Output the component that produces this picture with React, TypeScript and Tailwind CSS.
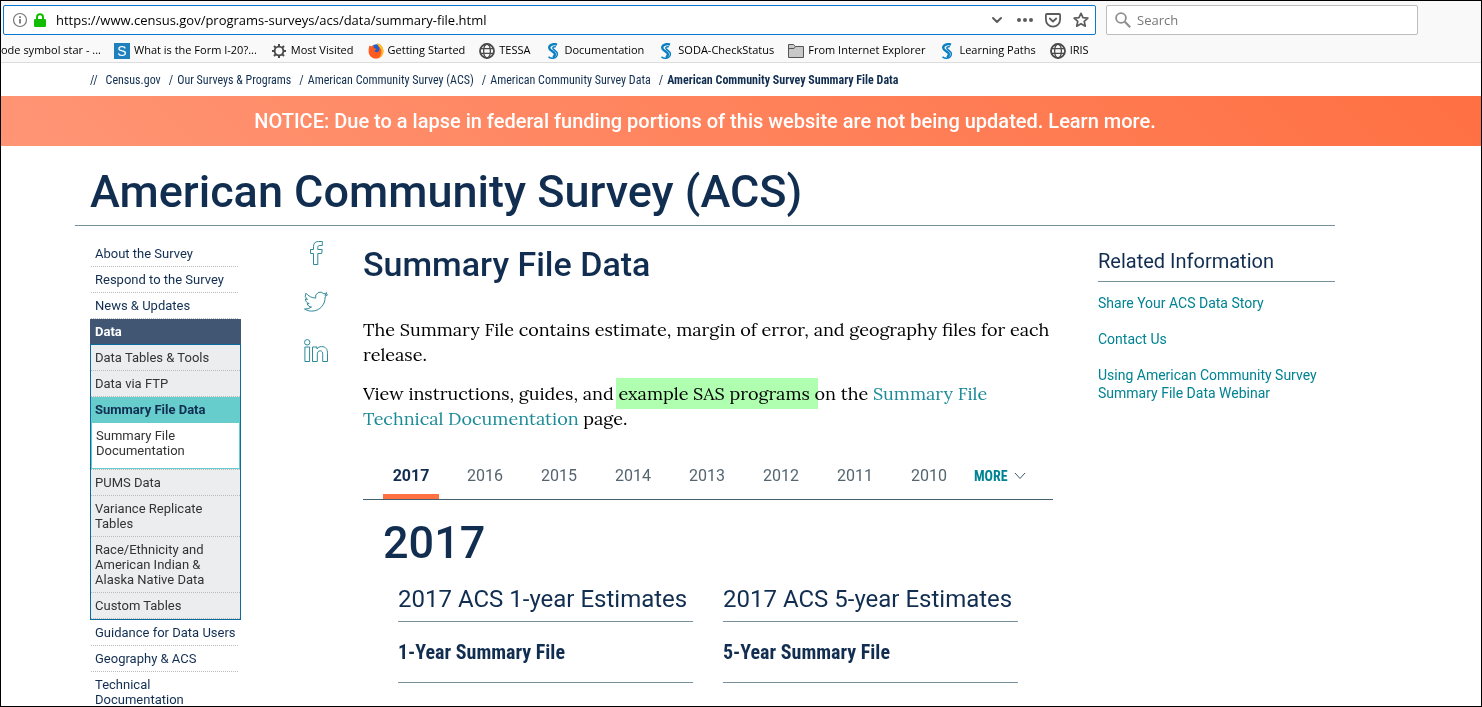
import type { ReactNode } from 'react'
import { ChevronDown } from 'lucide-react'

type Bookmark = { label: string; icon: ReactNode }
type SideItem = { label: string; active?: boolean; children?: string[] }

// ── Icons ────────────────────────────────────────────────────────
const GlobeIcon = () => (
  <svg viewBox="0 0 16 16" className="size-4 shrink-0" fill="none" stroke="#4a4a4a" strokeWidth="1.3">
    <circle cx="8" cy="8" r="7" strokeWidth="1.8" />
    <ellipse cx="8" cy="8" rx="3.4" ry="7" />
    <path d="M1.6 5.6h12.8M1.6 10.4h12.8" />
  </svg>
)

const SocrataIcon = () => (
  <svg viewBox="0 0 16 16" className="size-4 shrink-0" fill="none" stroke="#0a7fc2">
    <path d="M12 1.6C8.5.4 4.400 1.700 4.200 4.600c-.1 2.400 3 3.400 4.800 5 1.500 1.400 1 3.600-1 4.800" strokeWidth="2.4" />
    <path d="M10.800 3.800c-2.200-.5-3.600.6-2.700 1.900 1.200 1.500 4.300 2.500 4.300 5.300 0 2.700-2.600 4.200-5 4.200-1.600 0-2.800-.5-3.900-1.400" strokeWidth="1.5" />
  </svg>
)

const FormIcon = () => (
  <span className="flex size-4 shrink-0 items-center justify-center bg-[#2080bd] font-['Liberation_Sans',sans-serif] text-sm leading-4 text-white">S</span>
)

const GearIcon = () => (
  <svg viewBox="0 0 16 16" className="size-4 shrink-0" fill="none" stroke="#4a4a4a">
    <circle cx="8" cy="8" r="4.4" strokeWidth="1.9" />
    <path
      d="M8 1v2.600M8 12.400V15M1 8h2.600M12.400 8H15M3 3l1.900 1.900M11.100 11.100 13 13M13 3l-1.900 1.900M4.900 11.100 3 13"
      strokeWidth="2"
    />
  </svg>
)

const FirefoxIcon = () => (
  <svg viewBox="0 0 16 16" className="size-4 shrink-0">
    <circle cx="8.5" cy="7.5" r="6.3" fill="#1c5fd0" />
    <path
      d="M1.500 2.600C2.300 3 2.800 3.300 3.300 3.400 4.300 2.800 5.300 2.700 6.300 3 5.500 3.600 5.300 4.400 5.800 5c1 .7 2.300.3 2.600 1.100-.3.8-1.400 1-1.700 1.700.2 1.200 1.700 1.700 3 1.200 1.700-.8 2.200-3 1.300-4.500C10.500 3 9.200 1.800 9.300.4c2.600.4 5.500 3 6 6.500.6 4.800-2.700 8.700-7.300 8.700S.6 12.200.6 8c0-2.200.4-3.800.9-5.400z"
      fill="#ff5a1f"
    />
    <path d="M9.300.4c2.600.4 5.500 3 6 6.500.4 3.800-1.500 6.900-4.700 8.200 2.300-2.100 3.300-4.800 2.700-7.800C12.800 4.200 9.400 3 9.300.4z" fill="#ffc21a" />
  </svg>
)

const FolderIcon = () => (
  <svg viewBox="0 0 16 16" className="size-4 shrink-0" fill="#c8c8c8" stroke="#555" strokeWidth="1">
    <path d="M.5 14.500v-13h5l2 2h8v11z" />
    <path d="M.5 5.500H6l1.500-2" fill="none" />
  </svg>
)

const InfoIcon = () => (
  <svg viewBox="0 0 16 16" className="size-4 shrink-0" fill="none" stroke="#777" strokeWidth="1.2">
    <circle cx="8" cy="8" r="6.5" />
    <path d="M8 7v4.500M8 4.200v1.700" strokeWidth="1.8" />
  </svg>
)

const LockIcon = () => (
  <svg viewBox="0 0 12 14" className="h-3.5 w-3 shrink-0" fill="#12bc00">
    <rect x="0" y="6" width="12" height="8" rx="1.2" />
    <path d="M3 7V4.200a3 3 0 0 1 6 0V7" fill="none" stroke="#12bc00" strokeWidth="2" />
  </svg>
)

const PocketIcon = () => (
  <svg viewBox="0 0 16 16" className="size-4" fill="none" stroke="#5c5c5c" strokeWidth="1.8" strokeLinecap="round" strokeLinejoin="round">
    <path d="M1.900 2h12.200c.6 0 1 .4 1 1v4.500a7.100 7.100 0 0 1-14.200 0V3c0-.6.4-1 1-1z" />
    <path d="M4.800 6.500 8 9.500l3.200-3" />
  </svg>
)

const StarIcon = () => (
  <svg viewBox="0 0 16 16" className="size-4" fill="none" stroke="#5c5c5c" strokeWidth="1.7" strokeLinejoin="round">
    <path d="m8 1.300 2 4.400 4.900.5-3.700 3.200 1.100 4.800L8 11.700l-4.300 2.500 1.100-4.800L1.100 6.200 6 5.700z" />
  </svg>
)

const SearchIcon = () => (
  <svg viewBox="0 0 16 16" className="size-4 shrink-0" fill="none" stroke="#8f8f8f">
    <circle cx="6" cy="6" r="4.9" strokeWidth="1.8" />
    <path d="m9.800 9.800 5.400 5.400" strokeWidth="2.2" />
  </svg>
)

const FacebookOutline = () => (
  <svg viewBox="0 0 24 24" className="size-6" fill="none" stroke="#2d8b98" strokeWidth="1">
    <path d="M9.500 23.500V12.500h-3v-4h3V5.500c0-3.400 1.800-5 5-5h3.800v4h-2.600c-1.500 0-1.900.6-1.900 1.900v2.100h4.400l-.5 4h-3.900v11z" />
  </svg>
)

const TwitterOutline = () => (
  <svg viewBox="0 0 24 24" className="size-6" fill="none" stroke="#2d8b98" strokeWidth="1" strokeLinejoin="round">
    <path d="M23.500 4.600c-.8.400-1.700.6-2.700.7 1-.6 1.700-1.500 2-2.600-.9.500-1.900.9-3 1.100a4.700 4.700 0 0 0-8.100 4.300C7.800 8 4.400 6.100 2 3.200a4.700 4.700 0 0 0 1.500 6.300c-.8 0-1.500-.2-2.100-.6 0 2.300 1.600 4.200 3.800 4.700-.7.200-1.400.2-2.100.1.600 1.900 2.300 3.200 4.400 3.300A9.500 9.500 0 0 1 .5 19c2.100 1.300 4.600 2.100 7.200 2.100 8.800 0 13.700-7.400 13.400-14.100.9-.6 1.700-1.500 2.400-2.400z" />
  </svg>
)

const LinkedinOutline = () => (
  <svg viewBox="0 0 24 24" className="size-6" fill="none" stroke="#2d8b98" strokeWidth="1">
    <circle cx="3.2" cy="3.3" r="2.7" />
    <path d="M.9 8h4.700v14.500H.9zM8.500 8H13v2c.8-1.500 2.400-2.400 4.500-2.400 4.500 0 6 2.700 6 7v7.900h-4.800v-7.200c0-1.900-.4-3.500-2.500-3.500s-2.900 1.500-2.900 3.400v7.300H8.500z" />
  </svg>
)

// ── Data ─────────────────────────────────────────────────────────
const bookmarks: Bookmark[] = [
  { label: 'What is the Form I-20?...', icon: <FormIcon /> },
  { label: 'Most Visited', icon: <GearIcon /> },
  { label: 'Getting Started', icon: <FirefoxIcon /> },
  { label: 'TESSA', icon: <GlobeIcon /> },
  { label: 'Documentation', icon: <SocrataIcon /> },
  { label: 'SODA-CheckStatus', icon: <SocrataIcon /> },
  { label: 'From Internet Explorer', icon: <FolderIcon /> },
  { label: 'Learning Paths', icon: <SocrataIcon /> },
  { label: 'IRIS', icon: <GlobeIcon /> },
]

const crumbs = ['Census.gov', 'Our Surveys & Programs', 'American Community Survey (ACS)', 'American Community Survey Data']

const dataMenu: SideItem[] = [
  { label: 'Data Tables & Tools' },
  { label: 'Data via FTP' },
  { label: 'Summary File Data', active: true, children: ['Summary File Documentation'] },
  { label: 'PUMS Data' },
  { label: 'Variance Replicate Tables' },
  { label: 'Race/Ethnicity and American Indian & Alaska Native Data' },
  { label: 'Custom Tables' },
]

const years = ['2017', '2016', '2015', '2014', '2013', '2012', '2011', '2010']

const estimates = [
  { title: '2017 ACS 1-year Estimates', file: '1-Year Summary File' },
  { title: '2017 ACS 5-year Estimates', file: '5-Year Summary File' },
]

const related = ['Share Your ACS Data Story', 'Contact Us', 'Using American Community Survey Summary File Data Webinar']

// ── Browser toolbar ──────────────────────────────────────────────
function BrowserBar() {
  return (
    <header className="border-b border-[#dcdcdc] bg-[#f9f9fa] font-['Open_Sans','Noto_Sans',sans-serif] text-[11px] text-black">
      <div className="flex gap-2.5 pt-1 pr-[63px] pl-0.5">
        <div className="flex h-[30px] min-w-0 flex-1 items-center gap-1.5 rounded-xs border border-[#0a78d0] bg-white pr-1.5 pl-2">
          <InfoIcon />
          <LockIcon />
          <input
            aria-label="Address"
            defaultValue="https://www.census.gov/programs-surveys/acs/data/summary-file.html"
            className="min-w-0 flex-1 pt-0.5 pl-1 text-[13px] outline-none"
          />
          <div className="flex items-center gap-3">
            <button aria-label="Show history"><ChevronDown className="size-4" color="#5c5c5c" strokeWidth={3} /></button>
            <button aria-label="Page actions">
              <svg viewBox="0 0 16 16" className="size-4" fill="#5c5c5c">
                <circle cx="2" cy="8" r="2" /><circle cx="8" cy="8" r="2" /><circle cx="14" cy="8" r="2" />
              </svg>
            </button>
            <button aria-label="Save to Pocket"><PocketIcon /></button>
            <button aria-label="Bookmark this page"><StarIcon /></button>
          </div>
        </div>
        <label className="flex h-[30px] w-[312px] items-center gap-1.5 rounded-xs border border-[#bdbdbd] bg-white px-2">
          <SearchIcon />
          <input aria-label="Search" placeholder="Search" className="min-w-0 flex-1 pt-0.5 text-[13px] outline-none placeholder:text-[#777]" />
        </label>
      </div>
      <nav aria-label="Bookmarks" className="flex h-[27px] items-center gap-3.5 pt-1 whitespace-nowrap">
        <a href="#" className="-mr-px flex w-[100px] shrink-0 justify-end overflow-hidden">ode symbol star - ...</a>
        {bookmarks.map(({ label, icon }) => (
          <a key={label} href="#" className="flex items-center gap-1">{icon}{label}</a>
        ))}
      </nav>
    </header>
  )
}

// ── Left navigation ──────────────────────────────────────────────
function SideLink({ label }: { label: string }) {
  return (
    <li className="mr-[3px] ml-px border-b border-dotted border-[#bbb]">
      <a href="#" className="block py-[5px] pl-1">{label}</a>
    </li>
  )
}

function SideNav() {
  return (
    <nav aria-label="Section" className="w-[151px] shrink-0 text-[13px] leading-[15px] text-[#112e51]">
      <ul>
        <SideLink label="About the Survey" />
        <SideLink label="Respond to the Survey" />
        <SideLink label="News & Updates" />
        <li>
          <a href="#" className="block bg-[#415672] py-[5px] pl-[5px] font-bold text-white">Data</a>
          <ul className="border border-[#0a6b9c] bg-[#ebedef] text-[#333]">
            {dataMenu.map(item => (
              <li key={item.label} className="border-b border-dotted border-[#bbb]">
                <a
                  href="#"
                  className={item.active ? 'block bg-[#66cccc] pt-[5px] pb-1.5 pl-1 font-bold text-[#112e51]' : 'block py-[5px] pr-7 pl-1'}
                >
                  {item.label}
                </a>
                {item.children && (
                  <ul className="border border-t-0 border-[#66cccc] bg-white">
                    {item.children.map(c => (
                      <li key={c}><a href="#" className="block pt-[5px] pr-8 pb-2.5 pl-1">{c}</a></li>
                    ))}
                  </ul>
                )}
              </li>
            ))}
          </ul>
        </li>
        <SideLink label="Guidance for Data Users" />
        <SideLink label="Geography & ACS" />
        <SideLink label="Technical Documentation" />
      </ul>
    </nav>
  )
}

// ── Year tabs and estimates ──────────────────────────────────────
function YearTabs() {
  return (
    <section className="mt-[21px]">
      <div className="flex items-start border-b border-[#45606e] pl-5">
        <div role="tablist" className="flex gap-[18px]">
          {years.map((y, i) => (
            <button
              key={y}
              role="tab"
              aria-selected={i === 0}
              className={
                i === 0
                  ? 'w-14 border-b-5 border-[#ff7043] pt-2 pb-0.5 text-base leading-8 font-bold text-[#112e51]'
                  : 'w-14 border-b-5 border-transparent pt-2 pb-0.5 text-base leading-8 text-[#546570]'
              }
            >
              {y}
            </button>
          ))}
        </div>
        <button className="ml-[17px] flex items-center gap-1.5 pt-2 font-['Roboto_Condensed',Roboto,sans-serif] text-sm leading-8 font-bold text-[#008392]">
          MORE
          <svg viewBox="0 0 12 8" className="h-2 w-3" fill="none" stroke="#415672" strokeWidth="1">
            <path d="m1 1 5 5.500L11 1" />
          </svg>
        </button>
      </div>
      <div className="px-5 pt-4">
        <h3 className="text-[45px] leading-[54px] font-medium">2017</h3>
        <div className="mt-[13px] grid grid-cols-2 gap-[30px] px-[15px]">
          {estimates.map(({ title, file }) => (
            <div key={title}>
              <h4 className="border-b border-[#78909c] pb-1.5 text-2xl leading-8 whitespace-nowrap">{title}</h4>
              <div className="border-b border-[#78909c] pt-4 pb-4 font-['Roboto_Condensed',Roboto,sans-serif] text-xl leading-7 font-bold">
                <a href="#">{file}</a>
              </div>
            </div>
          ))}
        </div>
      </div>
    </section>
  )
}

export default function App() {
  return (
    <div className="h-screen overflow-hidden border border-black bg-white font-[Roboto,sans-serif] text-[#112e51]">
      <BrowserBar />

      <nav aria-label="Breadcrumb" className="flex h-[33px] items-center pl-[89px] font-['Roboto_Condensed',Roboto,sans-serif] text-xs whitespace-nowrap">
        <span className="mr-2">//</span>
        {crumbs.map(c => (
          <span key={c} className="flex">
            <a href="#">{c}</a>
            <span className="mr-1 ml-2">/</span>
          </span>
        ))}
        <a href="#" aria-current="page" className="font-bold">American Community Survey Summary File Data</a>
      </nav>

      <div className="bg-[linear-gradient(45deg,#ff9575,#ff7043)] pl-[74px] text-white">
        <p className="max-w-[1260px] text-center text-xl leading-[50px] font-medium">
          NOTICE: Due to a lapse in federal funding portions of this website are not being updated. <a href="#">Learn more.</a>
        </p>
      </div>

      <div className="ml-[74px] max-w-[1260px]">
        <h1 className="border-b border-[#78909c] px-[15px] pt-[19px] pb-1.5 text-[45px] leading-[54px] font-medium">
          American Community Survey (ACS)
        </h1>

        <div className="flex pt-[15px] pl-[15px]">
          <SideNav />

          <div className="ml-[63px] flex w-6 shrink-0 flex-col gap-[25px]">
            <a href="#" aria-label="Facebook"><FacebookOutline /></a>
            <a href="#" aria-label="Twitter"><TwitterOutline /></a>
            <a href="#" aria-label="LinkedIn"><LinkedinOutline /></a>
          </div>

          <main className="ml-[35px] min-w-0 flex-1">
            <h2 className="text-[34px] leading-[46px] font-medium">Summary File Data</h2>
            <div className="mt-[30px] flex flex-col gap-3.5 font-[Lora,'Liberation_Serif',serif] text-lg leading-[25px] text-black">
              <p>The Summary File contains estimate, margin of error, and geography files for each release.</p>
              <p>
                View instructions, guides, and{' '}
                <span className="relative">
                  example SAS programs
                  <span className="absolute -top-1 -right-2 -bottom-1 -left-0.5 bg-[#b0ffb0] mix-blend-multiply" />
                </span>{' '}
                on the <a href="#" className="text-[#1c8b99]">Summary File Technical Documentation</a> page.
              </p>
            </div>
            <YearTabs />
          </main>

          <aside className="ml-[45px] w-[237px] shrink-0 pt-1">
            <h2 className="border-b border-[#78909c] pb-1 text-xl leading-8">Related Information</h2>
            <ul className="mt-3 flex flex-col gap-[18px] text-sm leading-[18px] text-[#008392]">
              {related.map(r => (
                <li key={r}><a href="#">{r}</a></li>
              ))}
            </ul>
          </aside>
        </div>
      </div>
    </div>
  )
}
